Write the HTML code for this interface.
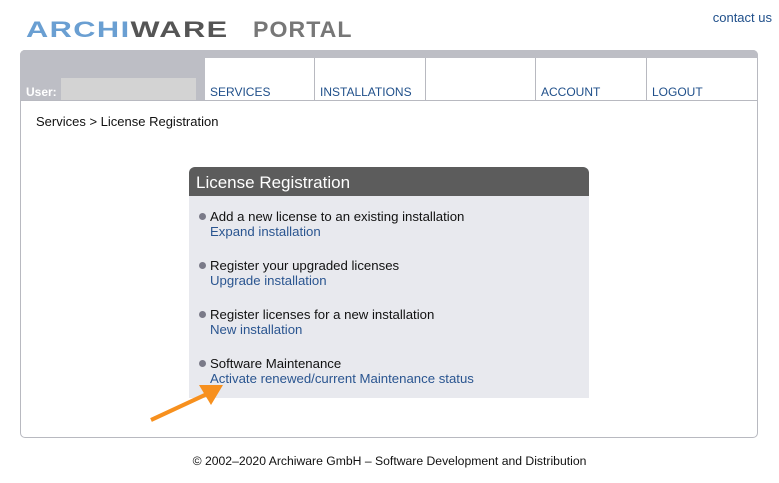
<!DOCTYPE html>
<html><head><style>
body{margin:0;width:779px;height:483px;background:#fff;font-family:"Liberation Sans",sans-serif;position:relative;overflow:hidden}
.a{position:absolute}
.logo{top:18px;font-size:22px;font-weight:bold;letter-spacing:1px;transform-origin:0 0;line-height:24px}
.tab{position:absolute;top:58px;height:42px;border-left:1px solid #b8b9c0;font-size:12px;color:#1f4f8a;box-sizing:border-box;padding-left:5px;padding-top:27px}
.it{position:absolute;left:210px;font-size:13.2px;color:#111;line-height:15px}
.it b{position:absolute;left:-11px;top:4px;width:7px;height:7px;border-radius:50%;background:#7a7a88}
.it span{color:#2a5590;display:block}
</style></head><body>
<div class="a logo" style="left:26px;transform:scaleX(1.4)"><span style="color:#6a9fd2">ARCHI</span><span style="color:#555">WARE</span></div>
<div class="a logo" style="left:253px;color:#777;transform:scaleX(1.05)">PORTAL</div>
<div class="a" style="right:7px;top:10px;font-size:13px;color:#1f4f8a">contact us</div>
<div class="a" style="left:20px;top:50px;width:736px;height:386px;border:1px solid #b8b9c0;border-radius:5px"></div>
<div class="a" style="left:20px;top:50px;width:738px;height:8px;background:#bdbec5;border-radius:5px 5px 0 0"></div>
<div class="a" style="left:20px;top:50px;width:185px;height:50px;background:#bdbec5;border-radius:5px 0 0 0"></div>
<div class="a" style="left:26px;top:85px;font-size:12px;font-weight:bold;color:#fff">User:</div>
<div class="a" style="left:61px;top:78px;width:135px;height:22px;background:#d3d3d3"></div>
<div class="a" style="left:20px;top:100px;width:738px;height:1px;background:#b8b9c0"></div>
<div class="tab" style="left:205px;width:109px;border-left:none">SERVICES</div>
<div class="tab" style="left:314px;width:111px">INSTALLATIONS</div>
<div class="tab" style="left:425px;width:110px"></div>
<div class="tab" style="left:535px;width:111px">ACCOUNT</div>
<div class="tab" style="left:646px;width:111px">LOGOUT</div>
<div class="a" style="left:36px;top:114px;font-size:13px;color:#111">Services &gt; License Registration</div>
<div class="a" style="left:189px;top:167px;width:400px;height:231px;background:#e8e9ee;border-radius:6px 6px 0 0"></div>
<div class="a" style="left:189px;top:167px;width:400px;height:29px;background:#5c5c5c;border-radius:6px 6px 0 0"></div>
<div class="a" style="left:196px;top:173px;font-size:17px;color:#fff">License Registration</div>
<div class="it" style="top:209px"><b></b>Add a new license to an existing installation<span>Expand installation</span></div>
<div class="it" style="top:258px"><b></b>Register your upgraded licenses<span>Upgrade installation</span></div>
<div class="it" style="top:307px"><b></b>Register licenses for a new installation<span>New installation</span></div>
<div class="it" style="top:356px"><b></b>Software Maintenance<span>Activate renewed/current Maintenance status</span></div>
<svg class="a" style="left:145px;top:380px" width="85" height="45"><line x1="6" y1="40" x2="62" y2="14" stroke="#f7901e" stroke-width="4"/><polygon points="78,5 54,5 66,25" fill="#f7901e"/></svg>
<div class="a" style="left:0;width:779px;top:454px;text-align:center;font-size:12.2px;color:#111">© 2002–2020 Archiware GmbH – Software Development and Distribution</div>
</body></html>
